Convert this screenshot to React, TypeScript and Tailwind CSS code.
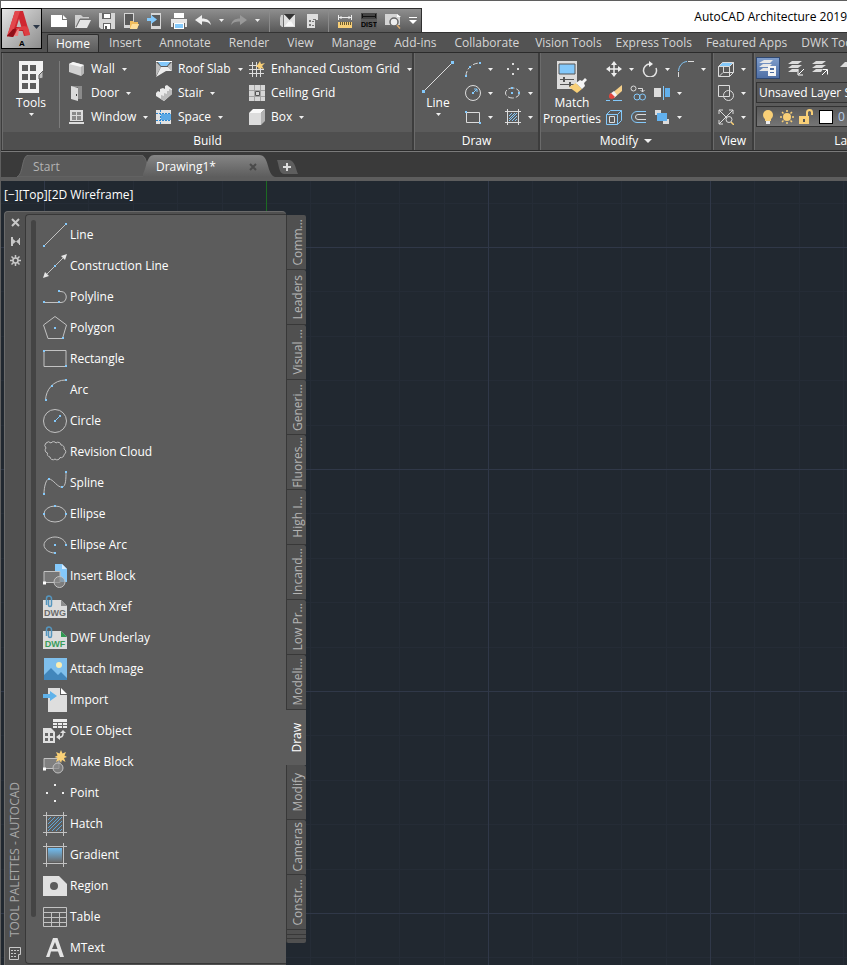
import React from "react";

const GREY = "#dcdcdc";
const BLUE = "#84c9fb";
const GOLD = "#f8cf77";

interface IcoProps {
  size?: number;
  children: React.ReactNode;
}

const Ico = ({ size = 16, children }: IcoProps) => (
  <svg
    width={size}
    height={size}
    viewBox={`0 0 ${size} ${size}`}
    fill="none"
    stroke="none"
    className="shrink-0"
    aria-hidden="true"
  >
    {children}
  </svg>
);

const Dot = ({ x, y, c = BLUE, s = 2 }: { x: number; y: number; c?: string; s?: number }) => (
  <rect x={x - s / 2} y={y - s / 2} width={s} height={s} fill={c} />
);

const Caret = () => (
  <svg width="5" height="3" viewBox="0 0 5 3" className="shrink-0" aria-hidden="true">
    <path d="M0 0h5L2.5 3z" fill="#f0f0f0" />
  </svg>
);

/* Quick access toolbar */

const qatLeft = [
  {
    label: "New",
    icon: <path d="M0 2h11v5h5v7H0zM12 2l4 4h-4z" fill="#fff" />,
  },
  {
    label: "Open",
    icon: (
      <>
        <path d="M0 15V2h6l2 2h6v2H5L1 15z" fill="#cfcfcf" />
        <path d="M5 7h11l-4 8H1z" fill="#e6e6e6" />
        <path d="M1 14L5 6h9" stroke="#6b6b6b" />
      </>
    ),
  },
  {
    label: "Save",
    icon: (
      <>
        <path d="M0 0h16v16H2l-2-2z" fill="#d6d6d6" />
        <path d="M3 0h9v6H3zM4 10h8v6H4z" fill="#666" />
        <path d="M5 1h6v4H5z" fill="#fff" />
        <path d="M5 11h6v5H5z" fill="#fff" />
        <path d="M6 13h2v3H6z" fill="#555" />
      </>
    ),
  },
  {
    label: "Open from Web & Mobile",
    icon: (
      <>
        <path d="M1 0h10v15H1z" fill="#d6d6d6" />
        <path d="M2 1h8v11H2z" fill="#5a5a5a" />
        <path d="M7 15V8h3l1 1h4v2l1 0-2 5H7z" fill="#f2bd5c" />
        <path d="M9 11h7l-2 5H7z" fill="#ffdf9a" />
      </>
    ),
  },
  {
    label: "Save to Web & Mobile",
    icon: (
      <>
        <path d="M4 0h10v16H4z" fill="#d6d6d6" />
        <path d="M5 2h8v11H5z" fill="#5a5a5a" />
        <path d="M0 5h4V2l6 4.500-6 4.500V8H0z" fill={BLUE} />
      </>
    ),
  },
  {
    label: "Plot",
    icon: (
      <>
        <path d="M3 0h10v5H3z" fill="#fff" />
        <path d="M0 6h16v8h-2v-4H2v4H0z" fill="#e6e6e6" />
        <path d="M3 10h10v6H3z" fill="#fff" />
        <path d="M4 11h8v4H4z" fill={BLUE} />
      </>
    ),
  },
];

const undoPath = "M0 7l7-5v3.500c5 0 8 2 9 6.500-2-2.500-4-3.500-9-3.500V12z";

const QatButton = ({ label, children }: { label: string; children: React.ReactNode }) => (
  <button aria-label={label} className="flex w-6 shrink-0 items-center justify-center">
    <Ico>{children}</Ico>
  </button>
);

const QatCaret = ({ label }: { label: string }) => (
  <button aria-label={label} className="flex w-3 shrink-0 items-center justify-center">
    <Caret />
  </button>
);

const QuickAccess = () => (
  <div className="flex h-6 shrink-0 items-stretch border-t border-r border-[#2f2f2f] bg-linear-to-b from-[#8f8f8f] to-[#595959] pl-[5px]">
    {qatLeft.map((q) => (
      <QatButton key={q.label} label={q.label}>
        {q.icon}
      </QatButton>
    ))}
    <QatButton label="Undo">
      <path d={undoPath} fill="#efefef" />
    </QatButton>
    <QatCaret label="Undo history" />
    <QatButton label="Redo">
      <path d={undoPath} fill="#999" transform="matrix(-1 0 0 1 16 0)" />
    </QatButton>
    <QatCaret label="Redo history" />
    <div className="mx-1.5 w-px bg-[#8a8a8a]" />
    <QatButton label="Project Navigator">
      <path d="M1 2h2v12H2L0 12V5z" fill="#cfcfcf" />
      <path d="M4 2h11v12H4z" fill="#e2e2e2" />
      <path d="M4 1h11L9.500 7z" fill="#333" />
      <path d="M5 13l4-5 1 1 1-1 3 5z" fill="#f8f8f8" />
    </QatButton>
    <QatButton label="Properties">
      <path d="M3 1h11v6h-3v8H3z" fill="#dedede" />
      <path d="M5 7h2v2H5zM5 11h2v2H5zM9 6h3v1H9zM8 8h2v1H8zM8 12h2v1H8z" fill="#777" />
    </QatButton>
    <div className="mx-1 w-px bg-[#8a8a8a]" />
    <QatButton label="Measure">
      <path d="M1.500 2v5M14.500 2v5M2 4.500h12M4 3v3M12 3v3" stroke="#eee" />
      <path d="M1 9h14v6H1z" fill={GOLD} />
      <path d="M3.500 9v3M5.500 9v3M7.500 9v3M9.500 9v3M11.500 9v3M13.500 9v3" stroke="#6b5a30" />
    </QatButton>
    <QatButton label="Distance">
      <path d="M0 0h16v16H0z" fill="#5c5c5c" />
      <path d="M0 0h16v6H0z" fill="#454545" />
      <path d="M1.500 1v4M14.500 1v4M2 3.500h12" stroke="#111" />
      <text x="8" y="14" textAnchor="middle" fontSize="7" fontWeight="bold" fontFamily="Liberation Sans, sans-serif" fill="#000">
        DIST
      </text>
    </QatButton>
    <QatButton label="Plot Preview">
      <path d="M0 1h12l3 3v8H0z" fill="#d4d4d4" />
      <path d="M12 1v3h4z" fill="#fff" />
      <circle cx="9" cy="9" r="4" fill="#eee" stroke="#666" strokeWidth="1.500" />
      <path d="M12 12l3 3.500" stroke="#d9a86b" strokeWidth="1.500" />
    </QatButton>
    <button aria-label="Customize" className="flex w-4 shrink-0 items-center justify-center">
      <svg width="8" height="8" viewBox="0 0 8 8" aria-hidden="true">
        <path d="M0 0h8v1H0zM0 3h8L4 7z" fill="#fff" />
      </svg>
    </button>
  </div>
);

const ribbonTabs = ["Insert", "Annotate", "Render", "View", "Manage", "Add-ins", "Collaborate"];

const ribbonTabsWide = ["Vision Tools", "Express Tools", "Featured Apps", "DWK Tools"];

const Header = () => (
  <header className="flex bg-[#535353]">
    <div className="w-[41px] shrink-0">
      <div className="h-[7px] bg-white" />
      <button
        aria-label="Application menu"
        className="flex h-[41px] w-full items-center justify-center border border-black bg-linear-to-br from-[#e4e4e4] to-[#8e8e8e]"
      >
        <svg width="39" height="39" viewBox="0 0 39 39" aria-hidden="true">
          <path d="M13 2h8l7 24-6 1-5-17-4 13-8 5z" fill="#cf2730" />
          <path d="M13 2h5l-4 12-4 11-5 2z" fill="#e2474c" />
          <path d="M5 27l9-9 8 0 2 4-8 0-5 6z" fill="#b0161f" />
          <path d="M22 17l4 1 2 8-5 0-2-5-6 1-1-3z" fill="#de3d42" />
          <path d="M5 27l6-7 3 0-3 8z" fill="#8f0f18" />
          <path d="M12 27l3-6 2-1-1 7z" fill="#ef8080" />
          <path d="M31 16h7l-3.500 4z" fill="#2d3848" />
          <text x="20" y="37" textAnchor="middle" fontSize="8" fontWeight="bold" fontFamily="Liberation Sans, sans-serif" fill="#000">
            A
          </text>
        </svg>
      </button>
    </div>
    <div className="min-w-0 flex-1">
      <div className="flex h-[31px] items-end bg-white">
        <QuickAccess />
        <h1 className="flex-1 self-center pl-4 text-right text-xs whitespace-nowrap text-black">
          AutoCAD Architecture 2019
        </h1>
      </div>
      <nav className="flex h-5 overflow-hidden border-t border-[#333] pl-[5px]">
        <button className="mt-px mr-px shrink-0 rounded-t-xs border border-b-0 border-[#2c2c2c] bg-linear-to-b from-[#7b7b7b] to-[#5c5c5c] px-2 text-xs leading-4 text-white">
          Home
        </button>
        {ribbonTabs.map((t) => (
          <button key={t} className="mt-px shrink-0 px-[9px] text-xs leading-4 whitespace-nowrap text-[#d6d6d6]">
            {t}
          </button>
        ))}
        {ribbonTabsWide.map((t) => (
          <button key={t} className="mt-px shrink-0 px-[7px] text-xs leading-4 whitespace-nowrap text-[#d6d6d6]">
            {t}
          </button>
        ))}
      </nav>
    </div>
  </header>
);

/* Ribbon panels */

interface PanelProps {
  title: string;
  caret?: boolean;
  className: string;
  children: React.ReactNode;
}

const Panel = ({ title, caret, className, children }: PanelProps) => (
  <section className={`flex shrink-0 flex-col border-l border-[#6b6b6b] bg-[#5b5b5b] ${className}`}>
    <div className="flex h-[79px] pt-1">{children}</div>
    <h2 className="flex h-[18px] items-center justify-center gap-1.5 bg-[#4f4f4f] text-xs text-white">
      {title}
      {caret && (
        <svg width="8" height="4" viewBox="0 0 8 4" aria-hidden="true">
          <path d="M0 0h8L4 4z" fill="#f0f0f0" />
        </svg>
      )}
    </h2>
  </section>
);

interface CmdProps {
  label: string;
  text?: boolean;
  caret?: boolean;
  icon: React.ReactNode;
}

const Cmd = ({ label, text, caret, icon }: CmdProps) => (
  <button aria-label={label} className="flex h-6 items-center">
    <Ico>{icon}</Ico>
    {text && <span className="ml-1.5 text-xs whitespace-nowrap text-white">{label}</span>}
    {caret && (
      <span className="ml-[7px]">
        <Caret />
      </span>
    )}
  </button>
);

const buildCols: CmdProps[][] = [
  [
    {
      label: "Wall",
      caret: true,
      icon: (
        <>
          <path d="M0 3l4-2 11 3v8l-3 3L0 11z" fill="#d0d0d0" />
          <path d="M0 3l4-2 11 3-3 2z" fill="#f5f5f5" />
          <path d="M12 6l3-2v8l-3 3z" fill="#b5b5b5" />
        </>
      ),
    },
    {
      label: "Door",
      caret: true,
      icon: (
        <>
          <path d="M2 1h11v13H9V2H2z" fill="#8b8b8b" />
          <path d="M2 1l7 2v13l-7-2z" fill="#dcdcdc" />
          <path d="M7 9h1v2H7z" fill="#444" />
        </>
      ),
    },
    {
      label: "Window",
      caret: true,
      icon: (
        <>
          <path d="M1 1h13v11H1zM0 13h15v2H0z" fill="#dcdcdc" />
          <path d="M3 3h4v3H3zM8 3h4v3H8zM3 7h4v4H3zM8 7h4v4H8z" fill="#8a8a8a" />
        </>
      ),
    },
  ],
  [
    {
      label: "Roof Slab",
      caret: true,
      icon: (
        <>
          <path d="M1 0h14l-4 5H5z" fill={BLUE} />
          <path d="M0 1l5 5-5 9zM12 5l4-4v9l-4-4z" fill="#bdbdbd" />
          <path d="M5 6h7l4 4h-6l-10 6z" fill="#ededed" />
          <path d="M0 0.500h16" stroke="#fff" />
        </>
      ),
    },
    {
      label: "Stair",
      caret: true,
      icon: (
        <>
          <path d="M0 8l2-2 2 1V4l3-1 2 1V1l2-1 5 4v5l-8 7-8-5z" fill="#e9e9e9" />
          <path d="M5 10l3 1V8l3 1V6l2 0V4l3 1v4l-8 7-3-2z" fill="#bbb" />
        </>
      ),
    },
    {
      label: "Space",
      caret: true,
      icon: (
        <>
          <path d="M0 1h15v14H0z" fill="#e2e2e2" />
          <path d="M5 5h10v6H5z" fill="#5aa9e6" />
          <path d="M4.500 1v14M0 4.500h15M0 11.500h15" stroke="#2a85cf" strokeDasharray="2 1" />
        </>
      ),
    },
  ],
  [
    {
      label: "Enhanced Custom Grid",
      caret: true,
      icon: (
        <>
          <path d="M3.500 1v15M7.500 1v15M11.500 7v9M0 4.500h9M0 8.500h15M0 12.500h15" stroke="#ddd" />
          <path d="M11 0l1 3 4-1-3 3 2 3-4-1-1 2-1-3-2 0 2-3z" fill={GOLD} />
        </>
      ),
    },
    {
      label: "Ceiling Grid",
      icon: (
        <>
          <path d="M0 0h16v16H0z" fill="#d6d6d6" />
          <path d="M5.500 0v16M11.500 0v16M0 5.500h16M0 11.500h16" stroke="#a2a2a2" />
          <path d="M6.500 6.500h4v4h-4z" stroke="#555" />
        </>
      ),
    },
    {
      label: "Box",
      caret: true,
      icon: (
        <>
          <path d="M0 4l4-4h12l-4 4z" fill="#f8f8f8" />
          <path d="M0 4h12v12H0z" fill="#dcdcdc" />
          <path d="M12 4l4-4v12l-4 4z" fill="#b3b3b3" />
        </>
      ),
    },
  ],
];

const drawCols: CmdProps[][] = [
  [
    {
      label: "Arc",
      caret: true,
      icon: (
        <>
          <path d="M1 15C1 9 6 2 15 2" stroke={GREY} strokeDasharray="5 2" />
          <Dot x={1} y={15} />
          <Dot x={5} y={6} />
          <Dot x={15} y={2} />
        </>
      ),
    },
    {
      label: "Circle",
      caret: true,
      icon: (
        <>
          <circle cx="8" cy="8" r="7.500" stroke={GREY} />
          <path d="M9 7l3-3M9 4h3v3" stroke={BLUE} />
          <Dot x={8} y={8} />
        </>
      ),
    },
    {
      label: "Rectangle",
      caret: true,
      icon: (
        <>
          <path d="M1.500 3.500h13v10h-13z" stroke={GREY} />
          <Dot x={1} y={3} />
          <Dot x={15} y={14} />
        </>
      ),
    },
  ],
  [
    {
      label: "Multiple Points",
      caret: true,
      icon: (
        <>
          <Dot x={8} y={3} c={GREY} />
          <Dot x={3} y={8} c={GREY} />
          <Dot x={13} y={8} c={GREY} />
          <Dot x={8} y={13} c={GREY} />
        </>
      ),
    },
    {
      label: "Ellipse",
      caret: true,
      icon: (
        <>
          <ellipse cx="7.500" cy="8" rx="7" ry="5" stroke={GREY} strokeDasharray="6 2" />
          <Dot x={7} y={3} />
          <Dot x={7} y={8} />
          <Dot x={14} y={8} />
        </>
      ),
    },
    {
      label: "Hatch",
      caret: true,
      icon: (
        <>
          <path d="M2.500 0v16M13.500 0v16M0 2.500h16M0 13.500h16" stroke={GREY} />
          <path d="M4 7l3-3M4 10l6-6M4 12l8-8M7 12l5-5M10 12l2-2" stroke={BLUE} />
        </>
      ),
    },
  ],
];

const modifyRows: CmdProps[][] = [
  [
    {
      label: "Move",
      caret: true,
      icon: (
        <>
          <path d="M8 2v12M2 8h12" stroke="#eee" strokeWidth="1.500" />
          <path d="M8 0l3 4H5zM8 16l3-4H5zM0 8l4-3v6zM16 8l-4-3v6z" fill="#eee" />
        </>
      ),
    },
    {
      label: "Rotate",
      caret: true,
      icon: (
        <>
          <path d="M8 3a6.500 6.500 0 1 0 6 4" stroke="#e4e4e4" strokeWidth="1.500" />
          <path d="M7 0l4 3-4 3z" fill="#eee" />
        </>
      ),
    },
    {
      label: "Fillet",
      caret: true,
      icon: (
        <>
          <path d="M0.500 11v5M10 0.500h6" stroke={GREY} />
          <path d="M0.500 10C1 5 4 1 9 0.500" stroke={BLUE} />
        </>
      ),
    },
  ],
  [
    {
      label: "Erase",
      icon: (
        <>
          <path d="M16 0v6L8 13l-3-4z" fill="#f6d08a" />
          <path d="M8 6l3 4-3 3-4-4z" fill="#f3f3f3" />
          <path d="M5 8l4 4c-2 3-6 2-6 0s0-3 2-4z" fill="#e2453c" />
          <path d="M0 15.500h4M7 15.500h9" stroke={BLUE} />
        </>
      ),
    },
    {
      label: "Copy",
      icon: (
        <>
          <circle cx="3.500" cy="3.500" r="2.500" stroke={GREY} />
          <path d="M8 3.500h4.500V7M10.500 5l2 2 2-2" stroke={GREY} />
          <circle cx="7" cy="12" r="3" stroke={BLUE} />
          <circle cx="12.500" cy="12" r="3" stroke={BLUE} />
        </>
      ),
    },
    {
      label: "Mirror",
      caret: true,
      icon: (
        <>
          <path d="M0 3h7v9H0z" fill={GREY} />
          <path d="M11 3h5v9h-5z" fill="#62b1ee" />
          <path d="M9.500 1v14" stroke={BLUE} />
        </>
      ),
    },
  ],
  [
    {
      label: "Edit Solid",
      icon: (
        <>
          <path d="M0.500 5.500h11v10H0.500zM0.500 5.500l4-4h11v10l-4 4M11.500 5.500l4-4" stroke={BLUE} />
          <path d="M3.500 7.500h5v6h-5z" stroke={GREY} />
        </>
      ),
    },
    {
      label: "Offset",
      icon: (
        <>
          <path d="M16 2.500H7a5.500 5.500 0 0 0 0 11h9" stroke={BLUE} />
          <path d="M16 5.500H8a2.500 2.500 0 0 0 0 5h8" stroke={GREY} />
        </>
      ),
    },
    {
      label: "Draw Order",
      caret: true,
      icon: (
        <>
          <path d="M1 1h6v3H3v2H1zM15 15H9v-3h4v-2h2z" fill={GREY} />
          <path d="M3 4h10v8H3z" fill="#62b1ee" />
        </>
      ),
    },
  ],
];

const viewCmds: CmdProps[] = [
  {
    label: "View Cube",
    caret: true,
    icon: (
      <>
        <path d="M1 5l4-4h11l-4 4z" fill={BLUE} />
        <path d="M0.500 5.500h11v10H0.500zM11.500 5.500l4-4v10l-4 4M0.500 5.500l4-4h11M5.500 6v5.500h10M5 11.500l-4 4" stroke={GREY} />
      </>
    ),
  },
  {
    label: "Object Display",
    caret: true,
    icon: (
      <>
        <path d="M0.500 0.500h11v11h-11z" stroke={GREY} />
        <circle cx="10.500" cy="10.500" r="5" stroke={GREY} />
      </>
    ),
  },
  {
    label: "Zoom",
    caret: true,
    icon: (
      <>
        <path d="M1 1l8 8M15 1L1 15M1 5V1h4M11 1h4v4M1 11v4h4" stroke={GREY} />
        <circle cx="11" cy="10.500" r="3" stroke={GREY} fill="#5b5b5b" />
        <path d="M13 13l3 3" stroke={GOLD} strokeWidth="1.500" />
      </>
    ),
  },
];

const BigButton = ({ label, caret, children }: { label: React.ReactNode; caret?: boolean; children: React.ReactNode }) => (
  <button className="flex h-[68px] shrink-0 flex-col items-center text-xs text-white">
    <Ico size={32}>{children}</Ico>
    <span className="mt-0.5">{label}</span>
    {caret && (
      <span className="mt-0.5 flex">
        <Caret />
      </span>
    )}
  </button>
);

const layerStack = "M4 1h10l-4 3H0zM4 5h10l-4 3H0zM4 9h7l-2 3H0z";

const Ribbon = () => (
  <div className="flex gap-0.5 overflow-hidden border-t border-b border-[#2b2b2b] bg-[#3d3d3d] pl-px">
    <Panel title="Build" className="w-[410px]">
      <div className="my-1 flex w-[57px] shrink-0 justify-center border-r border-[#7c7c7c]">
        <BigButton label="Tools" caret>
          <path d="M4 0h24v10l-4 4v18H4z" fill="#f2f2f2" />
          <path d="M24 14l4-4v7l-4 1z" fill="#bdbdbd" stroke="#5b5b5b" />
          <path d="M7 4h6v6H7zM15 4h6v6h-6zM7 13h6v6H7zM15 13h6v6h-6zM7 22h6v6H7zM15 22h6v6h-6z" fill="#5b5b5b" />
        </BigButton>
      </div>
      <div className="grid flex-1 grid-cols-[87px_93px_1fr] pl-[9px]">
        {buildCols.map((col, i) => (
          <div key={i} className="flex flex-col items-start">
            {col.map((c) => (
              <Cmd key={c.label} text {...c} />
            ))}
          </div>
        ))}
      </div>
    </Panel>
    <Panel title="Draw" className="w-[124px]">
      <div className="flex w-[46px] justify-center pt-1">
        <BigButton label="Line" caret>
          <path d="M2 30L30 2" stroke={GREY} />
          <Dot x={1.5} y={30.5} s={3} />
          <Dot x={30.5} y={1.5} s={3} />
        </BigButton>
      </div>
      <div className="flex gap-3 pl-1">
        {drawCols.map((col, i) => (
          <div key={i} className="flex flex-col items-start">
            {col.map((c) => (
              <Cmd key={c.label} {...c} />
            ))}
          </div>
        ))}
      </div>
    </Panel>
    <Panel title="Modify" caret className="w-[171px]">
      <div className="flex w-[62px] justify-center pt-1">
        <BigButton
          label={
            <>
              <span className="block leading-4">Match</span>
              <span className="block leading-4">Properties</span>
            </>
          }
        >
          <path d="M1 0h20v28H1z" fill="#dcdcdc" />
          <path d="M3 3h16v10H3z" fill={BLUE} stroke="#555" />
          <path d="M4 18.500h14M4 23.500h14" stroke="#555" />
          <path d="M7 16h2v5H7zM13 21h2v5h-2z" fill="#555" />
          <path d="M20 22l6 6-5 4-8-6z" fill={GOLD} />
          <path d="M20 22l4-3 2 1 3-3 2 2-3 3 1 3-3 3z" fill="#f5f5f5" />
        </BigButton>
      </div>
      <div className="pl-[3px]">
        {modifyRows.map((row, i) => (
          <div key={i} className="flex gap-2">
            {row.map((c) => (
              <Cmd key={c.label} {...c} />
            ))}
          </div>
        ))}
      </div>
    </Panel>
    <Panel title="View" className="w-[39px]">
      <div className="pl-1">
        {viewCmds.map((c) => (
          <Cmd key={c.label} {...c} />
        ))}
      </div>
    </Panel>
    <Panel title="Layers" caret className="w-[210px]">
      <div className="flex flex-1 flex-col gap-[3px] pl-px">
        <div className="flex items-center gap-2">
          <button aria-label="Layer Properties" className="flex h-[22px] w-6 shrink-0 items-center justify-center border border-[#2f4770] bg-linear-to-b from-[#7f9dcb] to-[#4f6fa5]">
            <Ico size={18}>
              <path d="M5 1h9l-3 3H0zM4 5h9l-3 3H0zM4 9h5v3H0z" fill="#e6e6e6" />
              <path d="M9 7h8v10H9z" fill="#f5f5f5" />
              <path d="M11 9h4v2h-4zM11 13h4v1h-4z" fill="#4d6ca2" />
            </Ico>
          </button>
          <button aria-label="Match Layer">
            <Ico>
              <path d={layerStack} fill={GREY} />
              <path d="M16 9l-5 5M10 10v5h5" stroke="#fff" />
            </Ico>
          </button>
          <button aria-label="Previous Layer">
            <Ico>
              <path d={layerStack} fill={GREY} />
              <path d="M10 15l5-5M11 9.500h4.500v5" stroke="#fff" />
            </Ico>
          </button>
          <button aria-label="Isolate Layer" className="ml-1">
            <Ico>
              <path d="M5 2h11v5H0z" fill={GREY} />
            </Ico>
          </button>
        </div>
        <select
          aria-label="Layer state"
          className="h-[21px] w-[200px] shrink-0 appearance-none border border-[#333] bg-[#575757] pl-0.5 text-xs text-white"
        >
          <option>Unsaved Layer State</option>
        </select>
        <div className="flex h-[21px] w-[200px] items-center gap-[3px] border border-[#333] bg-linear-to-b from-[#595959] to-[#757575] pl-[3px]">
          <Ico>
            <circle cx="8" cy="6" r="5" fill={GOLD} />
            <path d="M5 9h6v3H5z" fill={GOLD} />
            <path d="M6 12h4v3H6z" fill="#eee" />
          </Ico>
          <Ico>
            <circle cx="8" cy="8" r="4" fill={GOLD} />
            <path d="M8 1v2M8 13v2M1 8h2M13 8h2M3 3l1.500 1.500M11.500 11.500L13 13M3 13l1.500-1.500M11.500 4.500L13 3" stroke={GOLD} strokeWidth="1.500" />
          </Ico>
          <Ico>
            <path d="M1 7h10v8H1z" fill={GOLD} />
            <path d="M9 8V3.500a2.500 2.500 0 0 1 5 0V6" stroke={GOLD} strokeWidth="2" />
            <path d="M5 10h2v3H5z" fill="#555" />
          </Ico>
          <span className="ml-0.5 h-3.5 w-3.5 shrink-0 border border-black bg-white" />
          <select aria-label="Layer" className="flex-1 appearance-none pl-0.5 text-xs text-[#b7cdea]">
            <option>0</option>
          </select>
        </div>
      </div>
    </Panel>
  </div>
);

const FileTabs = () => (
  <div className="flex h-[30px] items-end border-t border-b-4 border-t-[#7a7a7a] border-b-[#5d5d5d] bg-[#3a3a3a] pl-4">
    <button className="relative h-[22px] w-[130px] shrink-0 pt-0.5 pl-4 text-left text-xs text-[#b4b4b4]">
      <svg className="absolute inset-0 h-full w-full" viewBox="0 0 130 22" preserveAspectRatio="none" aria-hidden="true">
        <path d="M0 22C7 19 4 0 12 0H122c7 0 6 5 8 8V22z" fill="#5a5a5a" stroke="#6b6b6b" />
      </svg>
      <span className="relative">Start</span>
    </button>
    <button className="relative -ml-1 flex h-[22px] w-[132px] shrink-0 items-center pt-0.5 pl-[13px] text-left text-xs text-white">
      <svg className="absolute inset-0 h-full w-full" viewBox="0 0 132 22" preserveAspectRatio="none" aria-hidden="true">
        <defs>
          <linearGradient id="tab" x1="0" y1="0" x2="0" y2="1">
            <stop offset="0" stopColor="#858585" />
            <stop offset="1" stopColor="#5d5d5d" />
          </linearGradient>
        </defs>
        <path d="M-3 22C4 19 2 0 11 0H116C127 0 123 19 132 22z" fill="url(#tab)" />
      </svg>
      <span className="relative">Drawing1*</span>
      <svg className="relative mr-[18px] ml-auto" width="8" height="8" viewBox="0 0 8 8" aria-hidden="true">
        <path d="M1 1l6 6M7 1L1 7" stroke="#4a4a4a" strokeWidth="2" />
      </svg>
    </button>
    <button aria-label="New drawing" className="relative mb-[3px] h-[14px] w-6 shrink-0">
      <svg width="24" height="14" viewBox="0 0 24 14" aria-hidden="true">
        <path d="M2 0h12c6 0 7 10 9 14H9C4 14 4 5 2 0z" fill="#5e5e5e" />
        <path d="M12 3v8M8 7h8" stroke="#dcdcdc" strokeWidth="2" />
      </svg>
    </button>
  </div>
);

/* Tool palette */

const SOFT = "#c2c2c2";

const Clip = () => (
  <path d="M5.500 5v5a1.500 1.500 0 0 0 3 0V3.500a2.500 2.500 0 0 0-5 0V10" stroke="#5596bf" strokeWidth="1.500" />
);

const FileMark = ({ label, color, corner }: { label: string; color: string; corner: string }) => (
  <>
    <path d="M0 5h18l6 6v12H0z" fill="#dcdcdc" />
    <path d="M18 5v6h6z" fill={corner} />
    <Clip />
    <text x="12" y="21" textAnchor="middle" fontSize="9" fontWeight="bold" fontFamily="Liberation Sans, sans-serif" fill={color}>
      {label}
    </text>
  </>
);

const tools: { label: string; icon: React.ReactNode }[] = [
  {
    label: "Line",
    icon: (
      <>
        <path d="M1 23L23 1" stroke={SOFT} />
        <Dot x={1} y={23} />
        <Dot x={23} y={1} />
      </>
    ),
  },
  {
    label: "Construction Line",
    icon: (
      <>
        <path d="M2 22L22 2" stroke={SOFT} />
        <path d="M24 0l-2 6-4-4zM0 24l2-6 4 4z" fill="#e6e6e6" />
        <Dot x={12} y={12} />
      </>
    ),
  },
  {
    label: "Polyline",
    icon: (
      <>
        <path d="M1 17.500h17c7 0 7-11 0-11h-2" stroke={SOFT} />
        <Dot x={1} y={17} />
        <Dot x={16} y={17} />
        <Dot x={16} y={6} />
      </>
    ),
  },
  {
    label: "Polygon",
    icon: (
      <>
        <path d="M12 0.500l11.500 8.500-4 13.500H5L0.500 9z" stroke={SOFT} />
        <Dot x={12} y={12} />
        <Dot x={20} y={22} />
      </>
    ),
  },
  {
    label: "Rectangle",
    icon: (
      <>
        <path d="M1 3.500h22v16H1z" stroke={SOFT} />
        <Dot x={1} y={4} />
        <Dot x={23} y={19} />
      </>
    ),
  },
  {
    label: "Arc",
    icon: (
      <>
        <path d="M2.500 22C3 12 10 2 23 2" stroke={SOFT} />
        <Dot x={3} y={22} />
        <Dot x={9} y={8} />
        <Dot x={23} y={2} />
      </>
    ),
  },
  {
    label: "Circle",
    icon: (
      <>
        <circle cx="12" cy="12" r="11.500" stroke={SOFT} />
        <path d="M12 12l5-5" stroke={BLUE} />
        <Dot x={12} y={12} />
        <Dot x={17} y={7} />
      </>
    ),
  },
  {
    label: "Revision Cloud",
    icon: (
      <path
        d="M3 8a3.500 3.500 0 1 1 5-5a3 3 0 0 1 5 0a3 3 0 0 1 5 2a3 3 0 0 1 3 4a3 3 0 0 1 0 5.500a3 3 0 0 1-4 3a3 3 0 0 1-5 1.500a3 3 0 0 1-5-2a3 3 0 0 1-2.500-4a3 3 0 0 1-1.500-5z"
        stroke={SOFT}
      />
    ),
  },
  {
    label: "Spline",
    icon: (
      <>
        <path d="M1 23C1 16 3 8 6 8c4 0 9 9 13 8 4 0 4-9 4-15" stroke={SOFT} />
        <Dot x={1} y={23} />
        <Dot x={6} y={8} />
        <Dot x={19} y={16} />
        <Dot x={23} y={1} />
      </>
    ),
  },
  {
    label: "Ellipse",
    icon: (
      <>
        <ellipse cx="12" cy="12" rx="11" ry="8" stroke={SOFT} />
        <Dot x={12} y={4} />
        <Dot x={1} y={12} />
        <Dot x={23} y={12} />
      </>
    ),
  },
  {
    label: "Ellipse Arc",
    icon: (
      <>
        <path d="M12 20C6 20 1 16 1 12c0-4 5-8 11-8s11 4 11 8" stroke={SOFT} />
        <Dot x={12} y={12} />
        <Dot x={12} y={20} />
        <Dot x={23} y={12} />
      </>
    ),
  },
  {
    label: "Insert Block",
    icon: (
      <>
        <path d="M12 0h7l5 5v13H12z" fill={BLUE} />
        <path d="M19 0l5 5h-5z" fill="#d4ecff" />
        <path d="M1 7.500h16v11H1z" fill="#777" stroke={SOFT} />
        <circle cx="16.500" cy="18" r="5.500" stroke={SOFT} fill="#8a8a8a" fillOpacity="0.7" />
        <Dot x={1.5} y={19} c="#fff" s={3} />
      </>
    ),
  },
  { label: "Attach Xref", icon: <FileMark label="DWG" color="#6a6a6a" corner="#8c8c8c" /> },
  { label: "DWF Underlay", icon: <FileMark label="DWF" color="#3a9c5b" corner="#2f9a50" /> },
  {
    label: "Attach Image",
    icon: (
      <>
        <path d="M1 1h23v22H1z" fill="#7fbfec" />
        <circle cx="16" cy="8" r="3" fill="#fdeeb0" />
        <path d="M1 18l7-7 7 7 3-3 6 6v2H1z" fill="#4286bb" />
      </>
    ),
  },
  {
    label: "Import",
    icon: (
      <>
        <path d="M5 0h12v7h7v17H5z" fill="#dedede" />
        <path d="M18 0l6 6h-6z" fill="#fff" />
        <path d="M0 6h7V3l7 5-7 5v-3H0z" fill="#5fb2ea" />
      </>
    ),
  },
  {
    label: "OLE Object",
    icon: (
      <>
        <path d="M10 0h14v9H10z" fill="#ececec" />
        <path d="M10 3.500h14M10 6.500h14M14.500 3v6M19.500 3v6" stroke="#666" />
        <path d="M0 9h8l4 4v11H0z" fill="#e0e0e0" />
        <path d="M2 14h3v3H2zM7 14h3v3H7zM2 19h3v3H2zM7 19h3v3H7z" fill="#666" />
        <path d="M20 13v2c0 3-2 3.500-5 3.500" stroke="#e0e0e0" strokeWidth="1.500" />
        <path d="M17 14l3-3 3 3zM17 15v6l-4-3z" fill="#e0e0e0" />
      </>
    ),
  },
  {
    label: "Make Block",
    icon: (
      <>
        <path d="M1 8.500h15v10H1z" fill="#808080" stroke={SOFT} />
        <circle cx="15" cy="18" r="5" stroke={SOFT} fill="#8a8a8a" fillOpacity="0.7" />
        <Dot x={1.5} y={19} c="#fff" s={3} />
        <path d="M18 0l1.500 3.500L23 2l-1.500 3.500L24 7l-3 1 1.500 4-3.500-2-1 3-1.500-3-3.500 2 1.500-4-3-1 3-1.500L13 2l3.500 1.500z" fill="#fbd277" />
      </>
    ),
  },
  {
    label: "Point",
    icon: (
      <>
        <Dot x={12} y={4} c="#eee" />
        <Dot x={4} y={12} c="#eee" />
        <Dot x={20} y={12} c="#eee" />
        <Dot x={12} y={20} c="#eee" />
      </>
    ),
  },
  {
    label: "Hatch",
    icon: (
      <>
        <path d="M3.500 0v24M20.500 0v24M0 3.500h24M0 20.500h24" stroke={SOFT} />
        <path d="M5 8l3-3M5 12l7-7M5 16l11-11M5 19L19 5M9 19L19 9M13 19l6-6M17 19l2-2" stroke="#5fa6d8" />
      </>
    ),
  },
  {
    label: "Gradient",
    icon: (
      <>
        <defs>
          <linearGradient id="fade" x1="0" y1="0" x2="0" y2="1">
            <stop offset="0" stopColor="#6fbdf2" />
            <stop offset="1" stopColor="#6a6a6a" />
          </linearGradient>
        </defs>
        <path d="M3.500 0v24M20.500 0v24M0 3.500h24M0 20.500h24" stroke={SOFT} />
        <path d="M5 5h14v14H5z" fill="url(#fade)" />
      </>
    ),
  },
  {
    label: "Region",
    icon: (
      <>
        <path d="M0 2h16l8 8v12H0z" fill="#e0e0e0" />
        <circle cx="11" cy="12" r="4" fill="#5c5c5c" />
      </>
    ),
  },
  {
    label: "Table",
    icon: (
      <>
        <path d="M0.500 2.500h23v19h-23z" stroke={SOFT} />
        <path d="M1 7.500h22M1 12.500h22M1 17.500h22M8.500 8v13M16.500 8v13" stroke={SOFT} />
      </>
    ),
  },
  {
    label: "MText",
    icon: (
      <path d="M10 2h4.500L21 21h-4l-2-5.500H8L6.500 21H3zM12 6L9 13h5.500z" fill="#e4e4e4" fillRule="evenodd" />
    ),
  },
];

const sideTabs = [
  "Comm...",
  "Leaders",
  "Visual ...",
  "Generi...",
  "Fluores...",
  "High I...",
  "Incand...",
  "Low Pr...",
  "Modeli...",
  "Draw",
  "Modify",
  "Cameras",
  "Constr...",
];

const Palette = () => (
  <aside className="flex items-start self-start pl-[3px]">
    <div className="flex rounded-t-sm border border-r-0 border-[#6a6a6a] bg-[#505050]">
      <div className="flex w-5 flex-col items-center gap-2 pt-[5px] pb-1.5 text-[#c8c8c8]">
        <button aria-label="Close">
          <svg width="9" height="11" viewBox="0 0 9 11" aria-hidden="true">
            <path d="M1 2l7 7M8 2L1 9" stroke="currentColor" strokeWidth="2" />
          </svg>
        </button>
        <button aria-label="Auto-hide">
          <svg width="9" height="11" viewBox="0 0 9 11" aria-hidden="true">
            <path d="M0 1h2v9H0zM2 3l3 2.500L2 8zM5 5.500L8 3v5zM8 2h1v7H8z" fill="currentColor" />
          </svg>
        </button>
        <button aria-label="Properties">
          <svg width="11" height="11" viewBox="0 0 11 11" aria-hidden="true">
            <circle cx="5.500" cy="5.500" r="2.500" fill="none" stroke="currentColor" strokeWidth="1.500" />
            <path d="M5.500 0v3M5.500 8v3M0 5.500h3M8 5.500h3M1.500 1.500l2 2M7.500 7.500l2 2M1.500 9.500l2-2M7.500 3.500l2-2" stroke="currentColor" strokeWidth="1.500" />
          </svg>
        </button>
        <div className="mt-auto rotate-180 text-xs whitespace-nowrap text-[#a8a8a8] [writing-mode:vertical-rl]">
          TOOL PALETTES - AUTOCAD
        </div>
        <svg width="12" height="13" viewBox="0 0 12 13" className="mt-0.5" aria-hidden="true">
          <path d="M0.500 0.500h11v7h-2v5h-9z" fill="none" stroke="currentColor" />
          <path d="M2 3h2v1H2zM5 3h2v1H5zM2 6h2v1H2zM5 6h2v1H5zM2 9h2v1H2zM5 9h2v1H5zM8 3h2v1H8z" fill="currentColor" />
        </svg>
      </div>
      <div className="mt-0.5 mb-0.5 flex w-[261px] rounded-l-sm border border-r-0 border-[#383838] bg-[#5c5c5c] pt-1 pl-[5px]">
        <div className="mt-px mb-[46px] w-[5px] shrink-0 rounded-full bg-[#444]" />
        <ul className="flex-1 pl-[7px]">
          {tools.map((t) => (
            <li key={t.label}>
              <button className="flex h-[31px] items-center gap-[3px] text-xs text-white">
                <Ico size={24}>{t.icon}</Ico>
                {t.label}
              </button>
            </li>
          ))}
        </ul>
      </div>
    </div>
    <div className="mt-1 flex w-5 flex-col">
      {sideTabs.map((t) => (
        <button
          key={t}
          className={
            t === "Draw"
              ? "flex h-[55px] items-center justify-center bg-[#5c5c5c] pl-0.5 text-xs text-white"
              : "flex h-[55px] items-center justify-center rounded-tr-xs border-b border-l border-[#383838] bg-[#505050] pl-0.5 text-xs text-[#b4b4b4]"
          }
        >
          <span className="rotate-180 whitespace-nowrap [writing-mode:vertical-rl]">{t}</span>
        </button>
      ))}
      <div className="h-[5px] border-b border-l border-[#383838] bg-[#505050]" />
      <div className="h-1 border-b border-l border-[#383838] bg-[#505050]" />
      <div className="h-1 rounded-b-xs border-l border-[#383838] bg-[#505050]" />
    </div>
  </aside>
);

const minor = [44, 89, 133, 178];

const DrawingGrid = () => (
  <svg className="absolute inset-0 h-full w-full" aria-hidden="true">
    <defs>
      <pattern id="grid" x="43" y="66" width="222" height="222" patternUnits="userSpaceOnUse">
        {minor.map((m) => (
          <path key={m} d={`M${m}.5 0v222M0 ${m}.5h222`} stroke="#252c36" />
        ))}
        <path d="M0.500 0v222M0 0.500h222" stroke="#303848" />
      </pattern>
    </defs>
    <rect width="100%" height="100%" fill="url(#grid)" />
    <path d="M265.500 0v2000" stroke="#1c6b22" />
  </svg>
);

const App = () => {
  return (
    <div className="flex min-h-screen flex-col overflow-hidden border-t border-l border-[#5f5f5f] bg-[#212830] font-['Open_Sans','Noto_Sans',sans-serif]">
      <Header />
      <Ribbon />
      <FileTabs />
      <main className="relative flex-1">
        <DrawingGrid />
        <div className="relative flex flex-col">
          <p className="h-[30px] pt-1.5 pl-[3px] text-xs text-white">[−][Top][2D Wireframe]</p>
          <Palette />
        </div>
      </main>
    </div>
  );
};

export default App;
